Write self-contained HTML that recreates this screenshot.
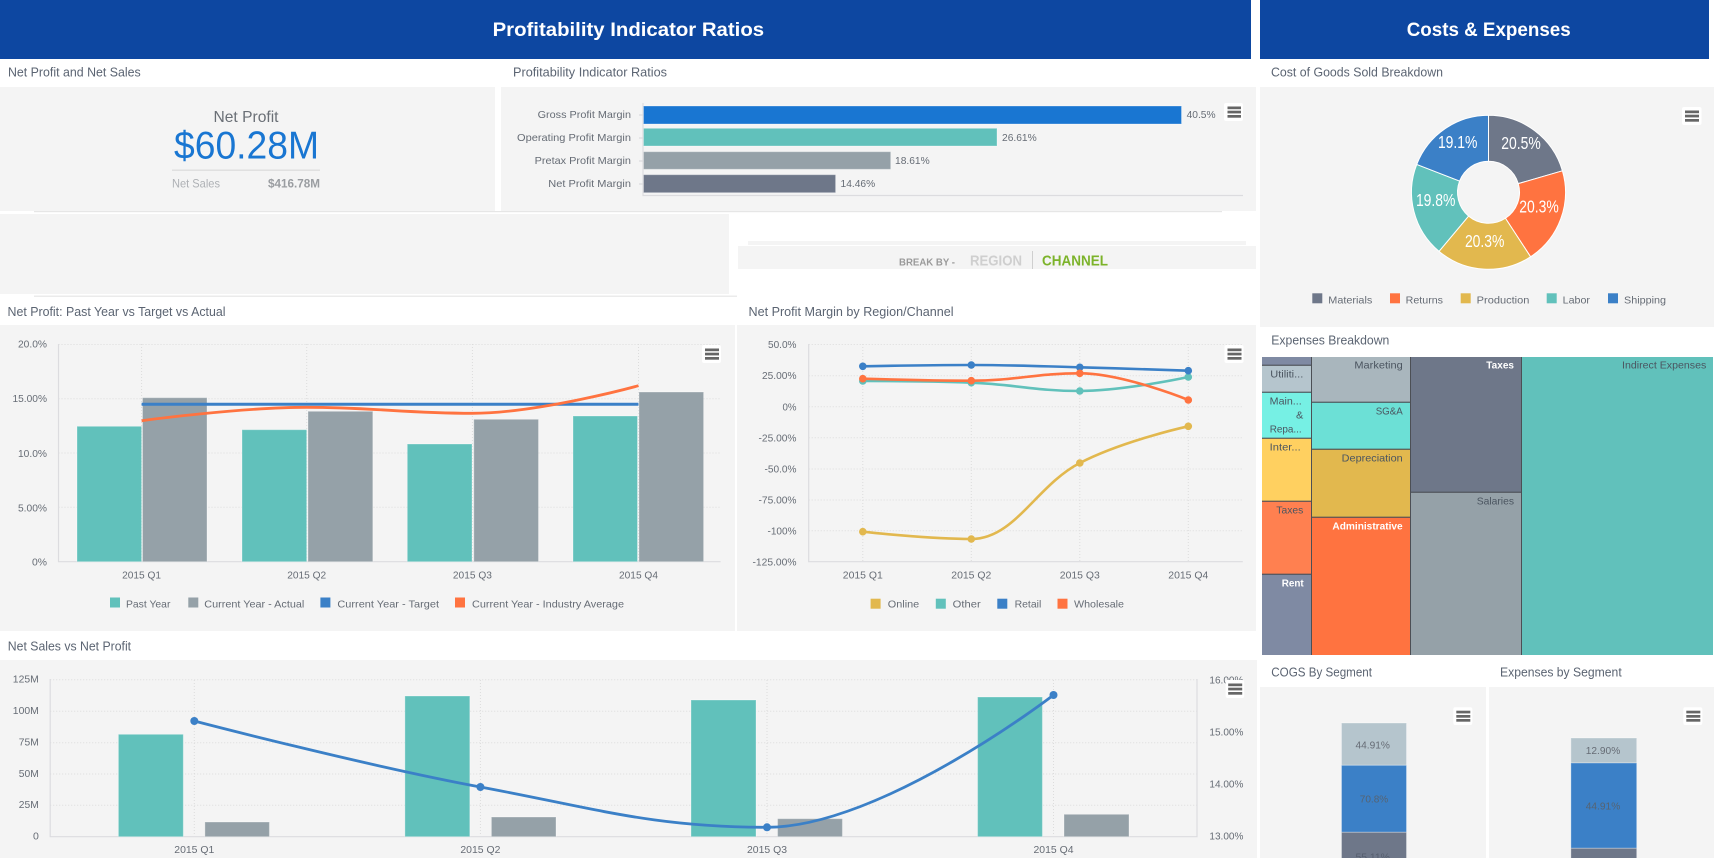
<!DOCTYPE html>
<html lang="en">
<head>
<meta charset="utf-8">
<title>Dashboard</title>
<style>
html,body{margin:0;padding:0;background:#fff;width:1714px;height:858px;overflow:hidden}
svg{display:block}
text{font-family:"Liberation Sans",sans-serif}
.t{font-size:13px;fill:#5b6472}
.l{font-size:10.5px;fill:#666c75}
.g{stroke:#dcdcdc;stroke-width:1;stroke-dasharray:1 2;fill:none}
.a{stroke:#dcdcdf;stroke-width:1.2;fill:none}
.b{stroke:#fff;stroke-opacity:.3;stroke-width:1}
.m{font-size:10.5px;fill:#4b5560}
</style>
</head>
<body>
<svg xmlns="http://www.w3.org/2000/svg" width="1714" height="858" viewBox="0 0 1714 858">
<defs><clipPath id="tm"><rect x="1262" y="357" width="451" height="298"/></clipPath></defs>
<rect width="1714" height="858" fill="#fff"/>

<!-- headers -->
<rect x="0" y="0" width="1251" height="59" fill="#0d47a1"/>
<rect x="1260" y="0" width="449" height="59" fill="#0d47a1"/>
<text x="492.6" y="36" font-size="19.5" font-weight="700" fill="#fff" textLength="271.5" lengthAdjust="spacingAndGlyphs">Profitability Indicator Ratios</text>
<text x="1406.7" y="36" font-size="19.5" font-weight="700" fill="#fff" textLength="164" lengthAdjust="spacingAndGlyphs">Costs &amp; Expenses</text>

<!-- panels -->
<g fill="#f4f4f4">
<rect x="0" y="87" width="495" height="124"/>
<rect x="501" y="87" width="755" height="124"/>
<rect x="0" y="214" width="729" height="80"/>
<rect x="748" y="241" width="498" height="4"/>
<rect x="738" y="246" width="518" height="23"/>
<rect x="0" y="325" width="735" height="306"/>
<rect x="737" y="325" width="519" height="306"/>
<rect x="0" y="660" width="1257" height="198"/>
<rect x="1260" y="87" width="454" height="240"/>
<rect x="1260" y="687" width="226" height="171"/>
<rect x="1489" y="687" width="225" height="171"/>
</g>
<rect x="34" y="211" width="1188" height="1.2" fill="#e6e6e6"/>
<rect x="34" y="295.6" width="703" height="1.2" fill="#e6e6e6"/>

<!-- section titles -->
<text class="t" x="8" y="76.5" textLength="132.7" lengthAdjust="spacingAndGlyphs">Net Profit and Net Sales</text>
<text class="t" x="513" y="76.5" textLength="154" lengthAdjust="spacingAndGlyphs">Profitability Indicator Ratios</text>
<text class="t" x="1271" y="76.5" textLength="172" lengthAdjust="spacingAndGlyphs">Cost of Goods Sold Breakdown</text>
<text class="t" x="1271.3" y="344.7" textLength="118" lengthAdjust="spacingAndGlyphs">Expenses Breakdown</text>
<text class="t" x="1271.3" y="676.7" textLength="100.7" lengthAdjust="spacingAndGlyphs">COGS By Segment</text>
<text class="t" x="1500" y="676.7" textLength="121.7" lengthAdjust="spacingAndGlyphs">Expenses by Segment</text>
<text class="t" x="7.5" y="316" textLength="218" lengthAdjust="spacingAndGlyphs">Net Profit: Past Year vs Target vs Actual</text>
<text class="t" x="748.5" y="316" textLength="205" lengthAdjust="spacingAndGlyphs">Net Profit Margin by Region/Channel</text>
<text class="t" x="7.8" y="650.5" textLength="123.3" lengthAdjust="spacingAndGlyphs">Net Sales vs Net Profit</text>

<!-- KPI -->
<text x="246" y="122" text-anchor="middle" font-size="16" fill="#6a6f76" textLength="65" lengthAdjust="spacingAndGlyphs">Net Profit</text>
<text x="246.5" y="158.5" text-anchor="middle" font-size="38.5" fill="#1976d2" textLength="145" lengthAdjust="spacingAndGlyphs">$60.28M</text>
<rect x="172" y="169.5" width="148" height="1.4" fill="#dedede"/>
<text x="172" y="187.5" font-size="12" fill="#aeb1b5" textLength="48" lengthAdjust="spacingAndGlyphs">Net Sales</text>
<text x="268" y="187.5" font-size="12" font-weight="700" fill="#9a9da1" textLength="52" lengthAdjust="spacingAndGlyphs">$416.78M</text>

<!-- ratio bars -->
<path class="a" d="M643 103V195.5H1243"/>
<path class="a" d="M639 115H643M639 138H643M639 161H643M639 184H643"/>
<rect class="b" x="643.5" y="106" width="538" height="18" fill="#1976d2"/>
<rect class="b" x="643.5" y="128.3" width="353.5" height="17.7" fill="#61c1bb"/>
<rect class="b" x="643.5" y="151.7" width="247.2" height="17.6" fill="#95a1a8"/>
<rect class="b" x="643.5" y="174.7" width="192.1" height="18" fill="#6e7789"/>
<g class="l" text-anchor="end">
<text x="631" y="118.2" textLength="93.4" lengthAdjust="spacingAndGlyphs">Gross Profit Margin</text>
<text x="631" y="141.2" textLength="114" lengthAdjust="spacingAndGlyphs">Operating Profit Margin</text>
<text x="631" y="164.2" textLength="96.4" lengthAdjust="spacingAndGlyphs">Pretax Profit Margin</text>
<text x="631" y="187.2" textLength="82.7" lengthAdjust="spacingAndGlyphs">Net Profit Margin</text>
</g>
<g class="l">
<text x="1186.6" y="118.2" textLength="29" lengthAdjust="spacingAndGlyphs">40.5%</text>
<text x="1002" y="141.2" textLength="34.7" lengthAdjust="spacingAndGlyphs">26.61%</text>
<text x="895" y="164.2" textLength="34.7" lengthAdjust="spacingAndGlyphs">18.61%</text>
<text x="840.5" y="187.2" textLength="34.7" lengthAdjust="spacingAndGlyphs">14.46%</text>
</g>

<!-- break by -->
<text x="899" y="265.5" font-size="10.5" font-weight="700" fill="#9a9a9a" textLength="56" lengthAdjust="spacingAndGlyphs">BREAK BY -</text>
<text x="970" y="265.5" font-size="15" font-weight="700" fill="#cfcfcf" textLength="52" lengthAdjust="spacingAndGlyphs">REGION</text>
<rect x="1032" y="251" width="1" height="18" fill="#cfcfcf"/>
<text x="1042" y="265.5" font-size="15" font-weight="700" fill="#7cb32a" textLength="66" lengthAdjust="spacingAndGlyphs">CHANNEL</text>

<!-- chart 1 -->
<path class="g" d="M58.5 344.5H720.6M58.5 398.8H720.6M58.5 453H720.6M58.5 507.3H720.6M141.6 344V561M306.7 344V561M472.4 344V561M638.5 344V561"/>
<path class="a" d="M58.5 344V561.7H720.6"/>
<g class="b">
<rect x="77" y="426.3" width="64.6" height="135.4" fill="#61c1bb"/>
<rect x="142.5" y="397.7" width="64.5" height="164" fill="#95a1a8"/>
<rect x="242" y="429.7" width="64.7" height="132" fill="#61c1bb"/>
<rect x="308" y="411.3" width="64.8" height="150.4" fill="#95a1a8"/>
<rect x="407.3" y="444" width="64.7" height="117.7" fill="#61c1bb"/>
<rect x="473.8" y="419.3" width="64.7" height="142.4" fill="#95a1a8"/>
<rect x="573" y="416" width="64.5" height="145.7" fill="#61c1bb"/>
<rect x="639" y="392" width="64.6" height="169.7" fill="#95a1a8"/>
</g>
<path d="M141.6 404.3H638.5" stroke="#3b80c7" stroke-width="3" fill="none"/>
<path d="M141.6 420.7C141.6 420.7 240.5 407.3 306.7 407.3C372.9 407.3 406.2 413.3 472.4 413.3C538.6 413.3 638.5 385.7 638.5 385.7" stroke="#ff7340" stroke-width="2.8" fill="none"/>
<g class="l" text-anchor="end">
<text x="47" y="347.6" textLength="29" lengthAdjust="spacingAndGlyphs">20.0%</text>
<text x="47" y="402.2" textLength="34.5" lengthAdjust="spacingAndGlyphs">15.00%</text>
<text x="47" y="457" textLength="29" lengthAdjust="spacingAndGlyphs">10.0%</text>
<text x="47" y="511.3" textLength="29" lengthAdjust="spacingAndGlyphs">5.00%</text>
<text x="47" y="565.7" textLength="15" lengthAdjust="spacingAndGlyphs">0%</text>
</g>
<g class="l" text-anchor="middle">
<text x="141.6" y="578.3" textLength="39" lengthAdjust="spacingAndGlyphs">2015 Q1</text>
<text x="306.7" y="578.3" textLength="39" lengthAdjust="spacingAndGlyphs">2015 Q2</text>
<text x="472.4" y="578.3" textLength="39" lengthAdjust="spacingAndGlyphs">2015 Q3</text>
<text x="638.5" y="578.3" textLength="39" lengthAdjust="spacingAndGlyphs">2015 Q4</text>
</g>
<rect x="110" y="597.5" width="10" height="10" fill="#61c1bb"/>
<rect x="188.3" y="597.5" width="10" height="10" fill="#95a1a8"/>
<rect x="320.4" y="597.5" width="10" height="10" fill="#3b80c7"/>
<rect x="455" y="597.5" width="10" height="10" fill="#ff7340"/>
<g class="l">
<text x="126" y="607.3" textLength="44.4" lengthAdjust="spacingAndGlyphs">Past Year</text>
<text x="204.3" y="607.3" textLength="100" lengthAdjust="spacingAndGlyphs">Current Year - Actual</text>
<text x="337.4" y="607.3" textLength="101.6" lengthAdjust="spacingAndGlyphs">Current Year - Target</text>
<text x="472" y="607.3" textLength="152" lengthAdjust="spacingAndGlyphs">Current Year - Industry Average</text>
</g>

<!-- chart 2 -->
<path class="g" d="M808.7 344.5H1242.8M808.7 375.7H1242.8M808.7 406.7H1242.8M808.7 437.7H1242.8M808.7 469H1242.8M808.7 500H1242.8M808.7 530.7H1242.8M862.8 344V561M971.3 344V561M1079.8 344V561M1188.3 344V561"/>
<path class="a" d="M808.7 344V561.7H1242.8"/>
<g fill="none" stroke-width="2.6">
<path stroke="#e2b84e" d="M862.8 531.7C862.8 531.7 927.9 539 971.3 539C1014.7 539 1036.4 485.5 1079.8 463C1123.2 440.5 1188.3 426.3 1188.3 426.3"/>
<path stroke="#61c1bb" d="M862.8 381C862.8 381 927.9 381 971.3 382.7C1014.7 384.4 1036.4 391 1079.8 391C1123.2 391 1188.3 377 1188.3 377"/>
<path stroke="#3b80c7" d="M862.8 366.3C862.8 366.3 927.9 365 971.3 365C1014.7 365 1036.4 366.16 1079.8 367.3C1123.2 368.44 1188.3 370.7 1188.3 370.7"/>
<path stroke="#ff7340" d="M862.8 378.7C862.8 378.7 927.9 380.7 971.3 380.7C1014.7 380.7 1036.4 373.3 1079.8 373.3C1123.2 373.3 1188.3 400 1188.3 400"/>
</g>
<g fill="#e2b84e"><circle cx="862.8" cy="531.7" r="3.8"/><circle cx="971.3" cy="539" r="3.8"/><circle cx="1079.8" cy="463" r="3.8"/><circle cx="1188.3" cy="426.3" r="3.8"/></g>
<g fill="#61c1bb"><circle cx="862.8" cy="381" r="3.8"/><circle cx="971.3" cy="382.7" r="3.8"/><circle cx="1079.8" cy="391" r="3.8"/><circle cx="1188.3" cy="377" r="3.8"/></g>
<g fill="#3b80c7"><circle cx="862.8" cy="366.3" r="3.8"/><circle cx="971.3" cy="365" r="3.8"/><circle cx="1079.8" cy="367.3" r="3.8"/><circle cx="1188.3" cy="370.7" r="3.8"/></g>
<g fill="#ff7340"><circle cx="862.8" cy="378.7" r="3.8"/><circle cx="971.3" cy="380.7" r="3.8"/><circle cx="1079.8" cy="373.3" r="3.8"/><circle cx="1188.3" cy="400" r="3.8"/></g>
<g class="l" text-anchor="end">
<text x="796.5" y="348" textLength="28.5" lengthAdjust="spacingAndGlyphs">50.0%</text>
<text x="796.5" y="379.2" textLength="34.5" lengthAdjust="spacingAndGlyphs">25.00%</text>
<text x="796.5" y="410.3" textLength="14" lengthAdjust="spacingAndGlyphs">0%</text>
<text x="796.5" y="441.4" textLength="38" lengthAdjust="spacingAndGlyphs">-25.00%</text>
<text x="796.5" y="472.7" textLength="32" lengthAdjust="spacingAndGlyphs">-50.0%</text>
<text x="796.5" y="503.7" textLength="38" lengthAdjust="spacingAndGlyphs">-75.00%</text>
<text x="796.5" y="534.4" textLength="29" lengthAdjust="spacingAndGlyphs">-100%</text>
<text x="796.5" y="565.4" textLength="44" lengthAdjust="spacingAndGlyphs">-125.00%</text>
</g>
<g class="l" text-anchor="middle">
<text x="862.8" y="578.3" textLength="40" lengthAdjust="spacingAndGlyphs">2015 Q1</text>
<text x="971.3" y="578.3" textLength="40" lengthAdjust="spacingAndGlyphs">2015 Q2</text>
<text x="1079.8" y="578.3" textLength="40" lengthAdjust="spacingAndGlyphs">2015 Q3</text>
<text x="1188.3" y="578.3" textLength="40" lengthAdjust="spacingAndGlyphs">2015 Q4</text>
</g>
<rect x="870.6" y="598.7" width="10" height="10" fill="#e2b84e"/>
<rect x="935.8" y="598.7" width="10" height="10" fill="#61c1bb"/>
<rect x="997.3" y="598.7" width="10" height="10" fill="#3b80c7"/>
<rect x="1057.5" y="598.7" width="10" height="10" fill="#ff7340"/>
<g class="l">
<text x="887.8" y="607.5" textLength="31.4" lengthAdjust="spacingAndGlyphs">Online</text>
<text x="952.7" y="607.5" textLength="28" lengthAdjust="spacingAndGlyphs">Other</text>
<text x="1014.6" y="607.5" textLength="26.7" lengthAdjust="spacingAndGlyphs">Retail</text>
<text x="1074" y="607.5" textLength="50" lengthAdjust="spacingAndGlyphs">Wholesale</text>
</g>

<!-- chart 3 -->
<path class="g" d="M50.2 679.7H1197M50.2 711.3H1197M50.2 742.7H1197M50.2 774H1197M50.2 805.3H1197M194.3 680V836M480.4 680V836M767 680V836M1053.5 680V836"/>
<path class="a" d="M50.2 679V836.7H1197V679"/>
<g class="b">
<rect x="118.4" y="734.3" width="64.9" height="102.4" fill="#61c1bb"/>
<rect x="404.9" y="696" width="64.9" height="140.7" fill="#61c1bb"/>
<rect x="691" y="700" width="65" height="136.7" fill="#61c1bb"/>
<rect x="977.6" y="697" width="64.8" height="139.7" fill="#61c1bb"/>
<rect x="204.9" y="822" width="64.5" height="14.7" fill="#95a1a8"/>
<rect x="491.4" y="817" width="64.6" height="19.7" fill="#95a1a8"/>
<rect x="777.6" y="818.7" width="64.8" height="18" fill="#95a1a8"/>
<rect x="1064" y="814.3" width="65" height="22.4" fill="#95a1a8"/>
</g>
<path d="M194.3 721C194.3 721 365.8 765.7 480.4 787C595 808.3 652.4 827.3 767 827.3C881.6 827.3 1053.5 695 1053.5 695" stroke="#3b80c7" stroke-width="2.8" fill="none"/>
<g fill="#3b80c7"><circle cx="194.3" cy="721" r="4"/><circle cx="480.4" cy="787" r="4"/><circle cx="767" cy="827.3" r="4"/><circle cx="1053.5" cy="695" r="4"/></g>
<g class="l" text-anchor="end">
<text x="38.8" y="682.7" textLength="26" lengthAdjust="spacingAndGlyphs">125M</text>
<text x="38.8" y="714.2" textLength="26" lengthAdjust="spacingAndGlyphs">100M</text>
<text x="38.8" y="745.7" textLength="20" lengthAdjust="spacingAndGlyphs">75M</text>
<text x="38.8" y="777.2" textLength="20" lengthAdjust="spacingAndGlyphs">50M</text>
<text x="38.8" y="808.2" textLength="20" lengthAdjust="spacingAndGlyphs">25M</text>
<text x="38.8" y="839.7">0</text>
</g>
<g class="l">
<text x="1209.4" y="683.3" textLength="34" lengthAdjust="spacingAndGlyphs">16.00%</text>
<text x="1209.4" y="735.3" textLength="34" lengthAdjust="spacingAndGlyphs">15.00%</text>
<text x="1209.4" y="787.3" textLength="34" lengthAdjust="spacingAndGlyphs">14.00%</text>
<text x="1209.4" y="839.3" textLength="34" lengthAdjust="spacingAndGlyphs">13.00%</text>
</g>
<g class="l" text-anchor="middle">
<text x="194.3" y="852.9" textLength="40" lengthAdjust="spacingAndGlyphs">2015 Q1</text>
<text x="480.4" y="852.9" textLength="40" lengthAdjust="spacingAndGlyphs">2015 Q2</text>
<text x="767" y="852.9" textLength="40" lengthAdjust="spacingAndGlyphs">2015 Q3</text>
<text x="1053.5" y="852.9" textLength="40" lengthAdjust="spacingAndGlyphs">2015 Q4</text>
</g>

<!-- donut -->
<g stroke="#fff" stroke-width="1" stroke-linejoin="round">
<path fill="#6e7789" d="M1488.5 115.3A77 77 0 0 1 1562.44 170.82L1518.27 183.65A31 31 0 0 0 1488.5 161.3Z"/>
<path fill="#ff7340" d="M1562.44 170.82A77 77 0 0 1 1530.57 256.79L1505.44 218.26A31 31 0 0 0 1518.27 183.65Z"/>
<path fill="#e2b84e" d="M1530.57 256.79A77 77 0 0 1 1439.06 251.33L1468.59 216.06A31 31 0 0 0 1505.44 218.26Z"/>
<path fill="#61c1bb" d="M1439.06 251.33A77 77 0 0 1 1416.74 164.41L1459.61 181.07A31 31 0 0 0 1468.59 216.06Z"/>
<path fill="#3b80c7" d="M1416.74 164.41A77 77 0 0 1 1488.5 115.3L1488.5 161.3A31 31 0 0 0 1459.61 181.07Z"/>
</g>
<g font-size="17.5" fill="#fff" text-anchor="middle">
<text x="1521" y="149" textLength="39.5" lengthAdjust="spacingAndGlyphs">20.5%</text>
<text x="1539" y="212.3" textLength="39.5" lengthAdjust="spacingAndGlyphs">20.3%</text>
<text x="1484.7" y="247" textLength="39.5" lengthAdjust="spacingAndGlyphs">20.3%</text>
<text x="1435.7" y="206" textLength="39.5" lengthAdjust="spacingAndGlyphs">19.8%</text>
<text x="1457.7" y="148" textLength="39.5" lengthAdjust="spacingAndGlyphs">19.1%</text>
</g>
<rect x="1312.3" y="293.3" width="10" height="10" fill="#6e7789"/>
<rect x="1390" y="293.3" width="10" height="10" fill="#ff7340"/>
<rect x="1460.7" y="293.3" width="10" height="10" fill="#e2b84e"/>
<rect x="1546.7" y="293.3" width="10" height="10" fill="#61c1bb"/>
<rect x="1608" y="293.3" width="10" height="10" fill="#3b80c7"/>
<g class="l">
<text x="1328.3" y="303.5" textLength="44" lengthAdjust="spacingAndGlyphs">Materials</text>
<text x="1405.7" y="303.5" textLength="37.3" lengthAdjust="spacingAndGlyphs">Returns</text>
<text x="1476.7" y="303.5" textLength="52.7" lengthAdjust="spacingAndGlyphs">Production</text>
<text x="1562.7" y="303.5" textLength="27.3" lengthAdjust="spacingAndGlyphs">Labor</text>
<text x="1624" y="303.5" textLength="42" lengthAdjust="spacingAndGlyphs">Shipping</text>
</g>

<!-- treemap -->
<g stroke="#4c4f55" stroke-width="1" clip-path="url(#tm)">
<rect x="1260" y="355" width="51.5" height="10.3" fill="#7f8aa3"/>
<rect x="1260" y="365.3" width="51.5" height="27" fill="#b5c5cd"/>
<rect x="1260" y="392.3" width="51.5" height="46" fill="#76f0e4"/>
<rect x="1260" y="438.3" width="51.5" height="63" fill="#ffd060"/>
<rect x="1260" y="501.3" width="51.5" height="73" fill="#ff8050"/>
<rect x="1260" y="574.3" width="51.5" height="84" fill="#7f8aa3"/>
<rect x="1311.5" y="355" width="99" height="47.3" fill="#a9b6bd"/>
<rect x="1311.5" y="402.3" width="99" height="47" fill="#6ce0d6"/>
<rect x="1311.5" y="449.3" width="99" height="68" fill="#e2b84e"/>
<rect x="1311.5" y="517.3" width="99" height="141" fill="#ff7340"/>
<rect x="1410.5" y="355" width="111" height="137.3" fill="#6e7789"/>
<rect x="1410.5" y="492.3" width="111" height="166" fill="#95a1a8"/>
<rect x="1521.5" y="355" width="196" height="303" fill="#61c1bb"/>
</g>
<g class="m" text-anchor="end">
<text x="1303.3" y="377.7" textLength="33" lengthAdjust="spacingAndGlyphs">Utiliti...</text>
<text x="1301.7" y="404.3" textLength="32" lengthAdjust="spacingAndGlyphs">Main...</text>
<text x="1303.3" y="418.7" textLength="7.3" lengthAdjust="spacingAndGlyphs">&amp;</text>
<text x="1301.7" y="432.7" textLength="32" lengthAdjust="spacingAndGlyphs">Repa...</text>
<text x="1300.7" y="450.7" textLength="31" lengthAdjust="spacingAndGlyphs">Inter...</text>
<text x="1303.3" y="513.7" textLength="27" lengthAdjust="spacingAndGlyphs">Taxes</text>
<text x="1402.7" y="368.7" textLength="48.3" lengthAdjust="spacingAndGlyphs">Marketing</text>
<text x="1402.7" y="414.3" textLength="27" lengthAdjust="spacingAndGlyphs">SG&amp;A</text>
<text x="1402.7" y="461.7" textLength="61" lengthAdjust="spacingAndGlyphs">Depreciation</text>
<text x="1514" y="504.3" textLength="37.3" lengthAdjust="spacingAndGlyphs">Salaries</text>
<text x="1706.3" y="368.7" textLength="84.3" lengthAdjust="spacingAndGlyphs">Indirect Expenses</text>
</g>
<g font-size="10.5" font-weight="700" fill="#fff" text-anchor="end">
<text x="1303.7" y="586.7" textLength="22" lengthAdjust="spacingAndGlyphs">Rent</text>
<text x="1402.7" y="529.7" textLength="70.3" lengthAdjust="spacingAndGlyphs">Administrative</text>
<text x="1514" y="368.7" textLength="27.7" lengthAdjust="spacingAndGlyphs">Taxes</text>
</g>

<!-- stacked bars -->
<g stroke="#fff" stroke-opacity=".3">
<rect x="1341.5" y="723" width="65" height="42.3" fill="#b5c5cd"/>
<rect x="1341.5" y="765.3" width="65" height="67" fill="#3b80c7"/>
<rect x="1341.5" y="832.3" width="65" height="30" fill="#6e7789"/>
<rect x="1570.9" y="738" width="65.8" height="25" fill="#b5c5cd"/>
<rect x="1570.9" y="763" width="65.8" height="85.3" fill="#3b80c7"/>
<rect x="1570.9" y="848.3" width="65.8" height="15" fill="#6e7789"/>
</g>
<g font-size="10.5" text-anchor="middle">
<text x="1372.7" y="748.5" fill="#666c75" textLength="34.5" lengthAdjust="spacingAndGlyphs">44.91%</text>
<text x="1374" y="802.5" fill="#566372" textLength="28.5" lengthAdjust="spacingAndGlyphs">70.8%</text>
<text x="1372.7" y="860.5" fill="#565f6e" textLength="34.5" lengthAdjust="spacingAndGlyphs">55.11%</text>
<text x="1603" y="754.2" fill="#666c75" textLength="34.5" lengthAdjust="spacingAndGlyphs">12.90%</text>
<text x="1603" y="809.5" fill="#566372" textLength="34.5" lengthAdjust="spacingAndGlyphs">44.91%</text>
</g>

<!-- context menu buttons -->
<g transform="translate(1224,103)"><rect width="19" height="18" rx="2" fill="#fff"/><rect x="3.5" y="3.5" width="13.5" height="2.7" fill="#666"/><rect x="3.5" y="7.7" width="13.5" height="2.7" fill="#666"/><rect x="3.5" y="12" width="13.5" height="2.7" fill="#666"/></g>
<g transform="translate(1682,107)"><rect width="19.5" height="18" rx="2" fill="#fff"/><rect x="3" y="3.5" width="14" height="2.7" fill="#666"/><rect x="3" y="7.7" width="14" height="2.7" fill="#666"/><rect x="3" y="12" width="14" height="2.7" fill="#666"/></g>
<g transform="translate(702,345)"><rect width="19" height="18" rx="2" fill="#fff"/><rect x="3" y="3.5" width="14" height="2.7" fill="#666"/><rect x="3" y="7.7" width="14" height="2.7" fill="#666"/><rect x="3" y="12" width="14" height="2.7" fill="#666"/></g>
<g transform="translate(1224.5,345)"><rect width="19" height="18" rx="2" fill="#fff"/><rect x="3" y="3.5" width="14" height="2.7" fill="#666"/><rect x="3" y="7.7" width="14" height="2.7" fill="#666"/><rect x="3" y="12" width="14" height="2.7" fill="#666"/></g>
<g transform="translate(1225.7,680)"><rect width="18.5" height="18" rx="2" fill="#fff"/><rect x="2.5" y="3.5" width="14" height="2.7" fill="#666"/><rect x="2.5" y="7.7" width="14" height="2.7" fill="#666"/><rect x="2.5" y="12" width="14" height="2.7" fill="#666"/></g>
<g transform="translate(1453.3,707.3)"><rect width="19" height="17.7" rx="2" fill="#fff"/><rect x="3" y="3.4" width="14" height="2.7" fill="#666"/><rect x="3" y="7.7" width="14" height="2.7" fill="#666"/><rect x="3" y="11.7" width="14" height="2.7" fill="#666"/></g>
<g transform="translate(1683.3,707.3)"><rect width="19" height="17.7" rx="2" fill="#fff"/><rect x="3" y="3.4" width="14" height="2.7" fill="#666"/><rect x="3" y="7.7" width="14" height="2.7" fill="#666"/><rect x="3" y="11.7" width="14" height="2.7" fill="#666"/></g>
</svg>
</body>
</html>
